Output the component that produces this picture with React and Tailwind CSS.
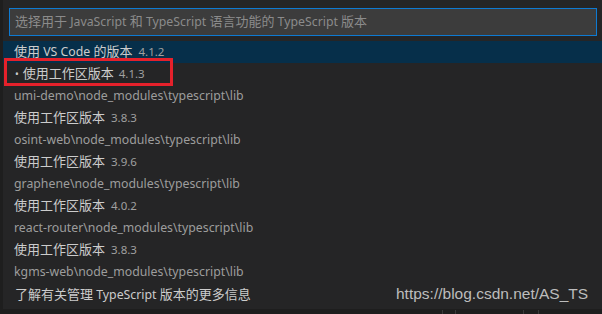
function L({ children }) {
  return <span className="text-[12.3px]">{children}</span>;
}

export default function App() {
  const items = [
    { label: "使用工作区版本", ver: "3.8.3", detail: "osint-web\\node_modules\\typescript\\lib" },
    { label: "使用工作区版本", ver: "3.9.6", detail: "graphene\\node_modules\\typescript\\lib" },
    { label: "使用工作区版本", ver: "4.0.2", detail: "react-router\\node_modules\\typescript\\lib" },
    { label: "使用工作区版本", ver: "3.8.3", detail: "kgms-web\\node_modules\\typescript\\lib" },
  ];
  return (
    <div className="relative w-[602px] h-[314px] bg-[#1e1e1e] overflow-hidden font-['Noto_Sans','Noto_Sans_CJK_SC',sans-serif]">
      <div className="ml-[3px] w-[599px] h-[309px] bg-[#252526] flex flex-col">
        <div className="pt-[8px] pl-[6px] pr-[5px]">
          <div className="h-[28px] border border-[#0e7ad2] bg-[#3c3c3c] flex items-center pl-[5px] text-[13px] text-[#8b8b8b] leading-none">
            <span>选择用于<L> JavaScript </L>和<L> TypeScript </L>语言功能的<L> TypeScript </L>版本</span>
          </div>
        </div>
        <div className="mt-[5px] flex flex-col text-[13px]">
          <div className="h-[22px] bg-[#062f4a] flex items-center pl-[11px] text-[#cccccc]">
            <span>使用<L> VS Code </L>的版本</span>
            <span className="ml-[6px] text-[11.5px] text-[#a0a0a0]">4.1.2</span>
          </div>
          <div className="h-[22px] flex items-center pl-[12px] text-[#cccccc]">
            <span className="text-[10px] mr-[4px]">•</span>
            <span>使用工作区版本</span>
            <span className="ml-[5px] text-[11.5px] text-[#a0a0a0]">4.1.3</span>
          </div>
          <div className="h-[22px] flex items-center pl-[11px] text-[12.3px] text-[#9d9d9d]">
            umi-demo\node_modules\typescript\lib
          </div>
          {items.map((it, i) => (
            <div key={i} className="flex flex-col">
              <div className="h-[22px] flex items-center pl-[11px] text-[#cccccc]">
                <span>{it.label}</span>
                <span className="ml-[6px] text-[11.5px] text-[#a0a0a0]">{it.ver}</span>
              </div>
              <div className="h-[22px] flex items-center pl-[11px] text-[12.3px] text-[#9d9d9d]">{it.detail}</div>
            </div>
          ))}
          <div className="h-[23px] flex items-center pl-[12px] text-[#cccccc]">
            <span>了解有关管理<L> TypeScript </L>版本的更多信息</span>
          </div>
        </div>
      </div>
      <div className="absolute left-[4px] top-[58px] w-[169px] h-[28px] border-[3px] border-[#e5212b]" />
      <div className="absolute left-[396px] top-[286px] text-[15.5px] text-[#bdbdbd] font-['Liberation_Sans',sans-serif] leading-none">
        https://blog.csdn.net/AS_TS
      </div>
      <div className="absolute left-[442px] top-[310px] w-px h-[4px] bg-[#3a3a3a]" />
      <div className="absolute left-[455px] top-[310px] w-px h-[4px] bg-[#3a3a3a]" />
      <div className="absolute left-[523px] top-[310px] w-px h-[4px] bg-[#3a3a3a]" />
      <div className="absolute left-[538px] top-[310px] w-px h-[4px] bg-[#3a3a3a]" />
    </div>
  );
}
